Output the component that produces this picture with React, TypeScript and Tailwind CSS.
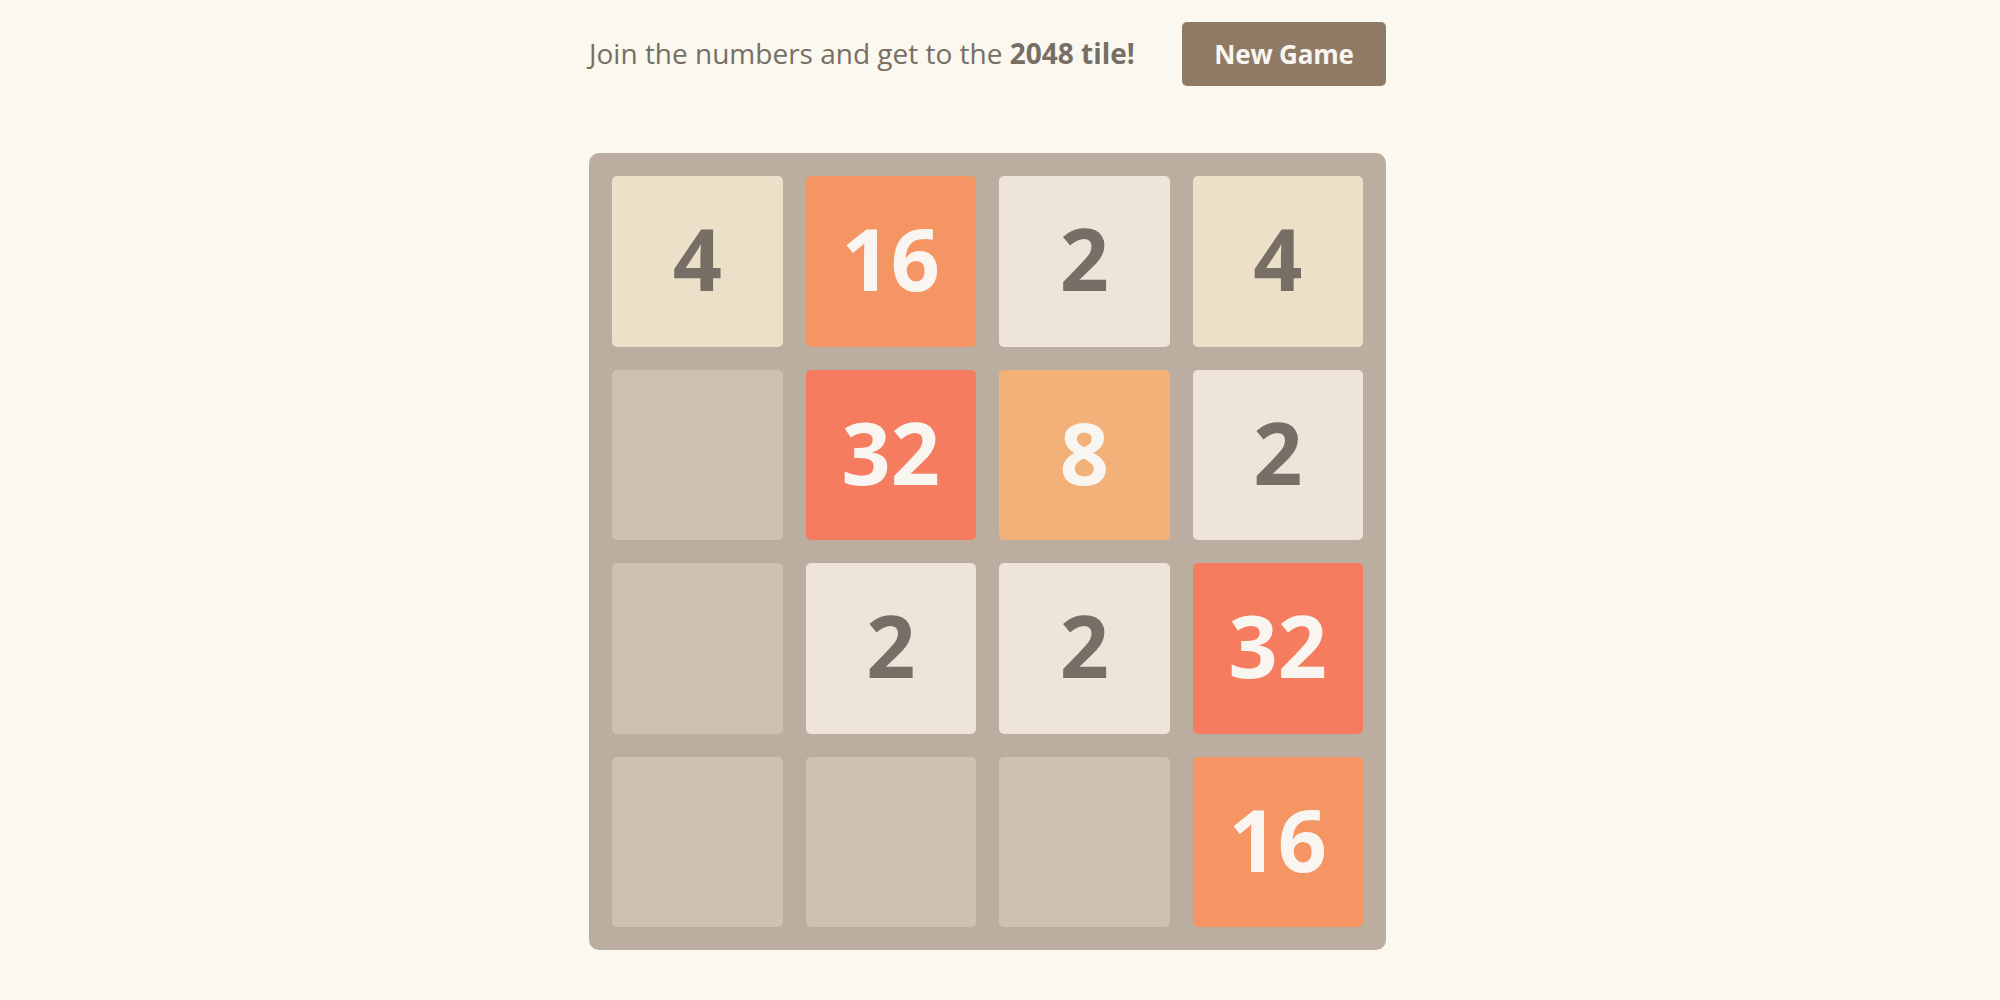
import React from "react";

type Cell = number | null;

const grid: Cell[][] = [
  [4, 16, 2, 4],
  [null, 32, 8, 2],
  [null, 2, 2, 32],
  [null, null, null, 16],
];

function tileClass(v: Cell): string {
  switch (v) {
    case 2:
      return "bg-[#eee4da] text-[#776e65]";
    case 4:
      return "bg-[#ede0c8] text-[#776e65]";
    case 8:
      return "bg-[#f2b179] text-[#f9f6f2]";
    case 16:
      return "bg-[#f59563] text-[#f9f6f2]";
    case 32:
      return "bg-[#f67c5f] text-[#f9f6f2]";
    default:
      return "bg-[#cdc1b4]";
  }
}

export default function App() {
  return (
    <div
      className="min-h-[1000px] w-full bg-[#faf8ef] flex justify-center pr-[25px]"
      style={{ fontFamily: '"Open Sans", "Noto Sans", sans-serif' }}
    >
      <div className="w-[797px] pt-[22px]">
        <div className="flex items-center justify-between h-[64px]">
          <p className="text-[28px] text-[#776e65] pb-[2px]">
            Join the numbers and get to the <strong className="font-bold">2048 tile!</strong>
          </p>
          <button className="w-[204px] h-[64px] rounded-[5px] bg-[#8f7a66] text-[#f9f6f2] text-[26px] font-bold tracking-[-0.2px]">
            New Game
          </button>
        </div>
        <div className="mt-[67px] w-[797px] h-[797px] rounded-[10px] bg-[#bbada0] p-[23px] grid grid-cols-4 grid-rows-4 gap-[23px]">
          {grid.flat().map((v, i) => (
            <div
              key={i}
              className={`rounded-[5px] flex items-center justify-center text-[86px] font-bold leading-none pb-[6px] ${tileClass(v)}`}
            >
              {v ?? ""}
            </div>
          ))}
        </div>
      </div>
    </div>
  );
}
